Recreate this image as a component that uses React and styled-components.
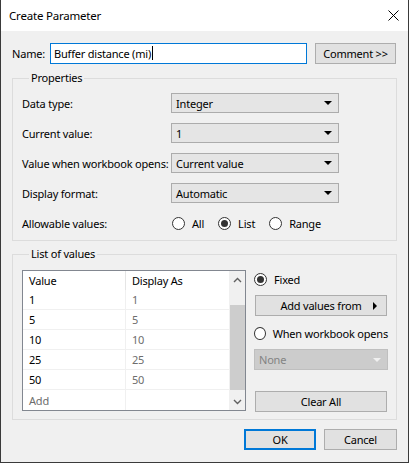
import React from 'react';
import styled, { createGlobalStyle } from 'styled-components';

const GlobalStyle = createGlobalStyle`
	html, body {
		margin: 0;
		padding: 0;
		background: #fff;
	}
	* {
		box-sizing: border-box;
	}
`;

const font = `"Segoe UI", "Noto Sans", "Liberation Sans", sans-serif`;

const Window = styled.div`
	width: 409px;
	height: 463px;
	display: flex;
	flex-direction: column;
	background: #f0f0f0;
	border: 1px solid #3a3a3a;
	border-top: none;
	font-family: ${font};
	font-size: 11px;
	letter-spacing: -0.2px;
	color: #000;
`;

const TitleBar = styled.div`
	height: 31px;
	flex-shrink: 0;
	display: flex;
	align-items: center;
	justify-content: space-between;
	padding: 0 9px 0 8px;
	background: #fff;
	font-size: 11.5px;
`;

const Body = styled.div`
	display: flex;
	flex-direction: column;
	padding: 12px 11px 0 11px;
`;

const NameRow = styled.div`
	display: flex;
	align-items: center;
	height: 20px;
`;

const NameLabel = styled.span`
	width: 38px;
`;

const TextInput = styled.div`
	width: 257px;
	height: 21px;
	border: 1px solid #0078d7;
	background: #fff;
	padding: 0 3px;
	display: flex;
	align-items: center;
	margin-right: 8px;
`;

const Caret = styled.span`
	display: inline-block;
	width: 1px;
	height: 14px;
	background: #000;
	margin-left: 1px;
`;

const Button = styled.div`
	width: ${p => p.$w || 81}px;
	height: 21px;
	display: flex;
	align-items: center;
	justify-content: center;
	position: relative;
	background: #e1e1e1;
	border: ${p => (p.$default ? '2px solid #0078d7' : '1px solid #adadad')};
`;

const Group = styled.fieldset`
	margin: ${p => p.$top}px 0 0 0;
	padding: ${p => p.$pad};
	border: 1px solid #dcdcdc;
	min-width: 0;
`;

const Legend = styled.legend`
	padding: 0 2px;
	margin-left: 7px;
	line-height: 16px;
`;

const Rows = styled.div`
	display: flex;
	flex-direction: column;
	gap: 10px;
`;

const FieldRow = styled.div`
	display: flex;
	align-items: center;
	height: 20px;
`;

const FieldLabel = styled.span`
	width: 149px;
	white-space: nowrap;
`;

const Select = styled.div`
	width: ${p => p.$w || 168}px;
	height: ${p => p.$h || 20}px;
	display: flex;
	align-items: center;
	justify-content: space-between;
	padding: 0 5px 0 4px;
	background: ${p => (p.$disabled ? '#cccccc' : '#e5e5e5')};
	border: 1px solid ${p => (p.$disabled ? '#bfbfbf' : '#acacac')};
	color: ${p => (p.$disabled ? '#838383' : '#000')};
`;

const DownArrow = styled.span`
	width: 0;
	height: 0;
	border-left: 4px solid transparent;
	border-right: 4px solid transparent;
	border-top: 4px solid ${p => p.$color || '#000'};
	margin-right: 1px;
`;

const RightArrow = styled.span`
	position: absolute;
	right: 9px;
	top: 6px;
	width: 0;
	height: 0;
	border-top: 4px solid transparent;
	border-bottom: 4px solid transparent;
	border-left: 4px solid #000;
`;

const RadioGroup = styled.div`
	display: flex;
	align-items: center;
	gap: 14px;
	margin-left: 1px;
`;

const RadioItem = styled.label`
	display: flex;
	align-items: center;
	gap: 7px;
	white-space: nowrap;
`;

const RadioCircle = styled.span`
	width: 13px;
	height: 13px;
	border-radius: 50%;
	border: 1px solid #333;
	background: #fff;
	display: flex;
	align-items: center;
	justify-content: center;
	&::after {
		content: '';
		width: 7px;
		height: 7px;
		border-radius: 50%;
		background: ${p => (p.$on ? '#333' : 'transparent')};
	}
`;

const ListArea = styled.div`
	display: flex;
	gap: 8px;
`;

const Table = styled.div`
	width: 224px;
	height: 141px;
	border: 1px solid #828790;
	background: #fff;
	display: flex;
`;

const Grid = styled.div`
	flex: 1;
	display: flex;
	flex-direction: column;
`;

const TableRow = styled.div`
	display: grid;
	grid-template-columns: 103px 1fr;
	height: ${p => (p.$head ? 19 : 20)}px;
	border-bottom: ${p => (p.$last || p.$head ? 'none' : '1px solid #f0f0f0')};
`;

const Cell = styled.div`
	display: flex;
	align-items: center;
	padding-left: 6px;
	color: ${p => (p.$muted ? '#6d6d6d' : '#000')};
	border-right: ${p => (p.$divider ? `1px solid ${p.$head ? '#e5e5e5' : '#f0f0f0'}` : 'none')};
`;

const Scrollbar = styled.div`
	width: 16px;
	display: flex;
	flex-direction: column;
	align-items: center;
	justify-content: space-between;
	background: #f0f0f0;
	padding: 0 0 0 1px;
`;

const ScrollBtn = styled.div`
	height: 17px;
	width: 100%;
	display: flex;
	align-items: center;
	justify-content: center;
`;

const Thumb = styled.div`
	width: 100%;
	flex: 1;
	margin: 17px 0 3px;
	background: #cdcdcd;
`;

const SideColumn = styled.div`
	width: 134px;
	display: flex;
	flex-direction: column;
`;

const SideRadio = styled(RadioItem)`
	height: 18px;
	margin-top: ${p => p.$top || 0}px;
`;

const SideButton = styled(Button)`
	margin-top: ${p => p.$top}px;
	margin-left: 1px;
`;

const SideSelect = styled(Select)`
	margin-top: 7px;
`;

const Footer = styled.div`
	display: flex;
	justify-content: flex-end;
	gap: 8px;
	margin-top: 9px;
`;

const Chevron = ({ up }) => (
	<svg width="9" height="6" viewBox="0 0 9 6">
		<path
			d={up ? 'M1 5 L4.5 1.5 L8 5' : 'M1 1 L4.5 4.5 L8 1'}
			fill="none"
			stroke="#606060"
			strokeWidth="1.4"
		/>
	</svg>
);

const Radio = ({ on, children }) => (
	<RadioItem>
		<RadioCircle $on={on} />
		{children}
	</RadioItem>
);

const fields = [
	['Data type:', 'Integer'],
	['Current value:', '1'],
	['Value when workbook opens:', 'Current value'],
	['Display format:', 'Automatic'],
];

const values = ['1', '5', '10', '25', '50'];

export default function App() {
	return (
		<>
			<GlobalStyle />
			<Window>
				<TitleBar>
					<span>Create Parameter</span>
					<svg width="11" height="11" viewBox="0 0 11 11">
						<path d="M0.5 0.5 L10.5 10.5 M10.5 0.5 L0.5 10.5" stroke="#000" strokeWidth="1" />
					</svg>
				</TitleBar>
				<Body>
					<NameRow>
						<NameLabel>Name:</NameLabel>
						<TextInput>
							Buffer distance (mi)<Caret />
						</TextInput>
						<Button $w={81}>Comment &gt;&gt;</Button>
					</NameRow>

					<Group $top={7} $pad="7px 9px 7px 9px">
						<Legend>Properties</Legend>
						<Rows>
							{fields.map(([label, value]) => (
								<FieldRow key={label}>
									<FieldLabel>{label}</FieldLabel>
									<Select>
										{value}
										<DownArrow />
									</Select>
								</FieldRow>
							))}
							<FieldRow>
								<FieldLabel>Allowable values:</FieldLabel>
								<RadioGroup>
									<Radio>All</Radio>
									<Radio on>List</Radio>
									<Radio>Range</Radio>
								</RadioGroup>
							</FieldRow>
						</Rows>
					</Group>

					<Group $top={5} $pad="8px 8px 7px 9px">
						<Legend>List of values</Legend>
						<ListArea>
							<Table>
								<Grid>
									<TableRow $head>
										<Cell $divider $head>Value</Cell>
										<Cell $head>Display As</Cell>
									</TableRow>
									{values.map(v => (
										<TableRow key={v}>
											<Cell $divider>{v}</Cell>
											<Cell $muted>{v}</Cell>
										</TableRow>
									))}
									<TableRow $last>
										<Cell $divider $muted>Add</Cell>
										<Cell />
									</TableRow>
								</Grid>
								<Scrollbar>
									<ScrollBtn><Chevron up /></ScrollBtn>
									<Thumb />
									<ScrollBtn><Chevron /></ScrollBtn>
								</Scrollbar>
							</Table>
							<SideColumn>
								<SideRadio>
									<RadioCircle $on />
									Fixed
								</SideRadio>
								<SideButton $w={132} $top={7}>
									Add values from
									<RightArrow />
								</SideButton>
								<SideRadio $top={8}>
									<RadioCircle />
									When workbook opens
								</SideRadio>
								<SideSelect $w={134} $h={21} $disabled>
									None
									<DownArrow $color="#f0f0f0" />
								</SideSelect>
								<SideButton $w={132} $top={21}>
									Clear All
								</SideButton>
							</SideColumn>
						</ListArea>
					</Group>

					<Footer>
						<Button $w={72} $default>OK</Button>
						<Button $w={73}>Cancel</Button>
					</Footer>
				</Body>
			</Window>
		</>
	);
}
